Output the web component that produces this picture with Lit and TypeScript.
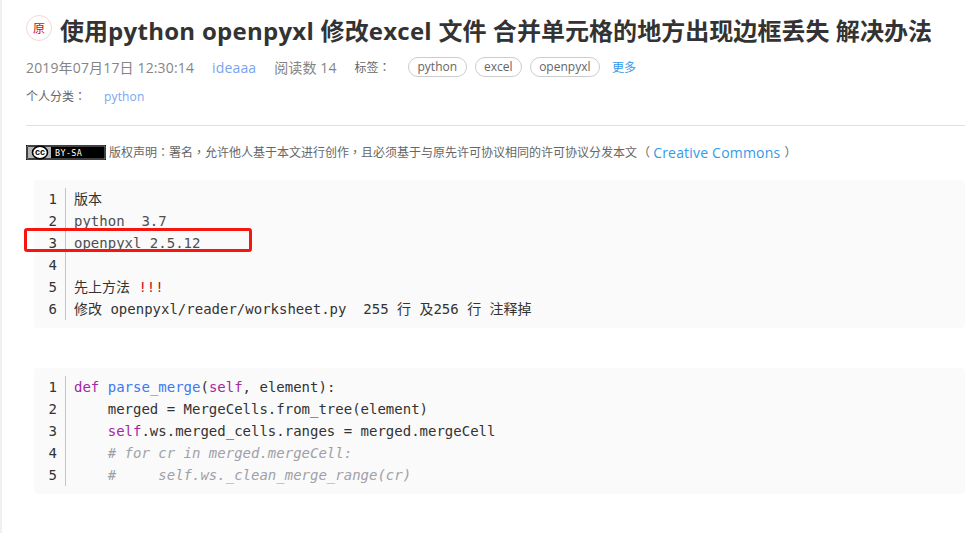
import { LitElement, html, css } from "lit";
import { customElement } from "lit/decorators.js";

@customElement("app-root")
export class AppRoot extends LitElement {
  static styles = css`
    :host { display: block; width: 965px; height: 533px; overflow: hidden; background: #fff; font-family: "Open Sans", "Noto Sans CJK SC", sans-serif; position: relative; }
    .page { height: 533px; box-sizing: border-box; border-left: 2px solid #f0f0f0; padding: 14px 0 0 24px; }
    .head { display: flex; align-items: center; gap: 8px; height: 34px; }
    .yuan { width: 26px; height: 26px; border-radius: 50%; border: 1px solid #f6d6d8; box-sizing: border-box; color: #ca0c16; font-size: 12px; display: flex; align-items: center; justify-content: center; margin-top: -6px; flex: none; }
    h1 { margin: 0; font-size: 24px; line-height: 34px; font-weight: 700; color: #333; white-space: nowrap; letter-spacing: 0.05px; }
    .l { letter-spacing: 0.27px; }
    .meta { display: flex; align-items: center; height: 24px; margin-top: 7px; font-size: 14px; color: #858585; white-space: nowrap; }
    .date { letter-spacing: 0.15px; }
    .author { color: #78a5f1; margin-left: 18px; letter-spacing: 0.15px; }
    .reads { margin-left: 18px; letter-spacing: 0.1px; }
    .label { margin-left: 18px; font-size: 12px; color: #666; width: 36px; }
    .p { font-family: "Noto Sans CJK TC", sans-serif; }
    .lp { margin-left: 1px; margin-right: 2px; }
    .tag { font-size: 12px; color: #666; border: 1px solid #ccc; border-radius: 10px; height: 20px; line-height: 18px; box-sizing: border-box; padding: 0 8.5px; margin-left: 8px; }
    .tag.first { margin-left: 17px; padding: 0 9px; }
    .tag.mid { padding: 0 8px; }
    .more { font-size: 12px; color: #3399ea; margin-left: 12px; }
    .cat { display: flex; align-items: center; height: 20px; margin-top: 7px; font-size: 12px; color: #666; white-space: nowrap; }
    .cat a { color: #78a5f1; margin-left: 18px; letter-spacing: 0.15px; }
    hr { border: 0; border-top: 1px solid #e0e0e0; margin: 19px 0 0; }
    .lic { display: flex; align-items: center; height: 20px; margin-top: 16px; font-size: 12px; color: #666; white-space: nowrap; }
    .lic svg { flex: none; margin-right: 3px; }
    .lic a { color: #3399ea; font-size: 14px; margin-left: 1px; letter-spacing: 0.2px; }
    .rp { margin-left: 4px; }
    .code { margin: 18px 0 0 8px; background: #fafafa; border-radius: 4px; padding: 8px 0; display: flex; font-family: "DejaVu Sans Mono", "Noto Sans CJK SC", monospace; font-size: 14px; line-height: 22px; color: #333; white-space: pre; }
    .code.second { margin-top: 40px; }
    .nums { width: 23px; text-align: right; padding-right: 8px; border-right: 1px solid #c5c5c5; color: #333; flex: none; }
    .lines { padding-left: 8px; }
    .line { height: 22px; }
    .kw { color: #a626a4; }
    .fn { color: #4078f2; }
    .cm { color: #a0a1a7; font-style: italic; }
    .bang { color: #ca0c16; }
    .dim { color: #4f4f4f; }
    .mark { position: absolute; left: 24px; top: 228px; width: 228px; height: 24px; box-sizing: border-box; border: 3px solid #f5170f; border-radius: 3px; }
  `;

  render() {
    const first = [
      html`版本`,
      html`<span class="dim">python  3.7</span>`,
      html`<span class="dim">openpyxl 2.5.12</span>`,
      html``,
      html`先上方法 <span class="bang">!!!</span>`,
      html`修改 openpyxl/reader/worksheet.py  255 行 及256 行 注释掉`,
    ];
    const second = [
      html`<span class="kw">def</span> <span class="fn">parse_merge</span>(<span class="kw">self</span>, element):`,
      html`    merged = MergeCells.from_tree(element)`,
      html`    <span class="kw">self</span>.ws.merged_cells.ranges = merged.mergeCell`,
      html`    <span class="cm"># for cr in merged.mergeCell:</span>`,
      html`    <span class="cm">#     self.ws._clean_merge_range(cr)</span>`,
    ];
    const block = (rows: unknown[], cls = "") => html`
      <div class="code ${cls}">
        <div class="nums">${rows.map((_, i) => html`<div class="line">${i + 1}</div>`)}</div>
        <div class="lines">${rows.map((r) => html`<div class="line">${r}</div>`)}</div>
      </div>`;
    return html`
      <div class="page">
        <div class="head">
          <span class="yuan">原</span>
          <h1>使用<span class="l">python openpyxl </span>修改<span class="l">excel </span>文件 合并单元格的地方出现边框丢失 解决办法</h1>
        </div>
        <div class="meta">
          <span class="date">2019年07月17日 12:30:14</span>
          <span class="author">ideaaa</span>
          <span class="reads">阅读数 14</span>
          <span class="label">标签<span class="p">：</span></span>
          <span class="tag first">python</span>
          <span class="tag mid">excel</span>
          <span class="tag">openpyxl</span>
          <span class="more">更多</span>
        </div>
        <div class="cat"><span>个人分类<span class="p">：</span></span><a>python</a></div>
        <hr />
        <div class="lic">
          <svg width="80" height="15" viewBox="0 0 80 15">
            <rect x="0" y="0" width="80" height="15" fill="#000"/>
            <rect x="1" y="1" width="78" height="13" fill="#000" stroke="#fff" stroke-width="0.5"/>
            <rect x="2" y="2" width="23" height="11" fill="#b5b5b5"/>
            <ellipse cx="14" cy="7.5" rx="7.5" ry="6.2" fill="#fff" stroke="#000" stroke-width="1.6"/>
            <text x="14" y="10.4" font-family="Liberation Sans" font-size="9" font-weight="700" text-anchor="middle" fill="#000">cc</text>
            <text x="29" y="10.5" font-family="DejaVu Sans Mono" font-size="8.4" letter-spacing="0.4" fill="#fff">BY-SA</text>
          </svg>
          <span>版权声明<span class="p">：</span>署名<span class="p">，</span>允许他人基于本文进行创作<span class="p">，</span>且必须基于与原先许可协议相同的许可协议分发本文<span class="p lp">（</span></span>
          <a>Creative Commons</a>
          <span class="rp">）</span>
        </div>
        ${block(first)}
        ${block(second, "second")}
      </div>
      <div class="mark"></div>
    `;
  }
}
